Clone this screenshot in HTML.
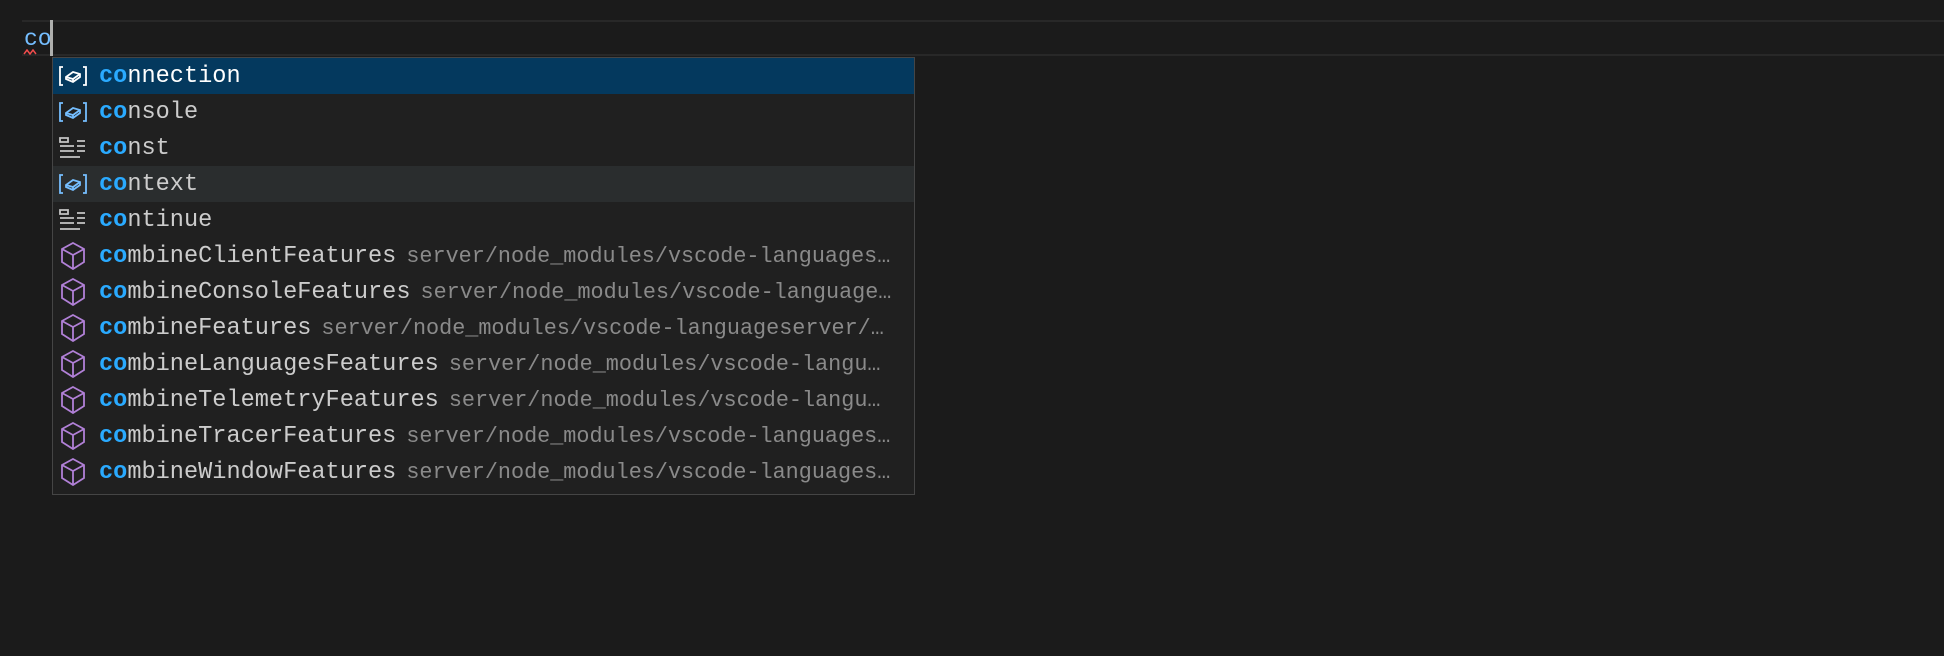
<!DOCTYPE html>
<html><head><style>
html,body{margin:0;padding:0;width:1944px;height:656px;background:#1b1b1b;overflow:hidden;font-family:"Liberation Mono",monospace;}
.line{position:absolute;left:22px;top:20px;width:1922px;height:32px;border-top:2px solid #282828;border-bottom:2px solid #282828;}
.co{position:absolute;left:24px;top:21px;font-size:23px;line-height:36px;color:#75beff;}
.cur{position:absolute;left:50px;top:20px;width:3px;height:36px;background:#aeafad;}
.squig{position:absolute;left:23px;top:49px;}
.w{position:absolute;left:52px;top:57px;width:861px;height:436px;background:#202020;border:1px solid #454545;}
.r{position:absolute;left:0;width:861px;height:36px;font-size:23.6px;line-height:38px;color:#cccccc;white-space:nowrap;}
.r .ic{position:absolute;left:5px;top:6px;}
.r .l{position:absolute;left:46px;}
.h{color:#2aaaff;font-weight:bold;}
.sel{background:#04395e;color:#fff;}
.hov{background:#2a2d2e;}
.d{color:#8a8a8a;font-size:21.8px;margin-left:10px;}
</style></head><body>
<div class="line"></div>
<div class="co">co</div>
<div class="cur"></div>
<svg class="squig" width="14" height="6"><path d="M1 5 L4 1 L7 5 L10 1 L13 5" stroke="#f14c4c" stroke-width="1.5" fill="none"/></svg>
<div class="w">
<div class="r sel" style="top:0"><svg class="ic" width="30" height="24" viewBox="0 0 30 24"><g stroke="#fff" stroke-width="1.8" fill="none"><path d="M5 3H2V21H5M25 3H28V21H25"/><path d="M8 13L15 8L22 10V13L15 18L8 15Z"/><path d="M8 13L15 15L22 10M15 15V18"/></g></svg><span class="l"><span class="h">co</span>nnection</span></div>
<div class="r" style="top:36px"><svg class="ic" width="30" height="24" viewBox="0 0 30 24"><g stroke="#75beff" stroke-width="1.8" fill="none"><path d="M5 3H2V21H5M25 3H28V21H25"/><path d="M8 13L15 8L22 10V13L15 18L8 15Z"/><path d="M8 13L15 15L22 10M15 15V18"/></g></svg><span class="l"><span class="h">co</span>nsole</span></div>
<div class="r" style="top:72px"><svg class="ic" width="30" height="24" viewBox="0 0 30 24"><g stroke="#c5c5c5" stroke-width="1.8" fill="none"><path d="M2 2H10V6H2ZM2 10H16M19 10H27M2 15H16M19 15H27M2 21H22M19 5H27"/></g></svg><span class="l"><span class="h">co</span>nst</span></div>
<div class="r hov" style="top:108px"><svg class="ic" width="30" height="24" viewBox="0 0 30 24"><g stroke="#75beff" stroke-width="1.8" fill="none"><path d="M5 3H2V21H5M25 3H28V21H25"/><path d="M8 13L15 8L22 10V13L15 18L8 15Z"/><path d="M8 13L15 15L22 10M15 15V18"/></g></svg><span class="l"><span class="h">co</span>ntext</span></div>
<div class="r" style="top:144px"><svg class="ic" width="30" height="24" viewBox="0 0 30 24"><g stroke="#c5c5c5" stroke-width="1.8" fill="none"><path d="M2 2H10V6H2ZM2 10H16M19 10H27M2 15H16M19 15H27M2 21H22M19 5H27"/></g></svg><span class="l"><span class="h">co</span>ntinue</span></div>
<div class="r" style="top:180px"><svg class="ic" width="30" height="28" viewBox="0 0 30 28" style="top:4px"><g stroke="#b180d7" stroke-width="1.8" fill="none"><path d="M15 1L26 7V20L15 27L4 20V7Z"/><path d="M4 7L15 13L26 7M15 13V27"/></g></svg><span class="l"><span class="h">co</span>mbineClientFeatures<span class="d">server/node_modules/vscode-languages…</span></span></div>
<div class="r" style="top:216px"><svg class="ic" width="30" height="28" viewBox="0 0 30 28" style="top:4px"><g stroke="#b180d7" stroke-width="1.8" fill="none"><path d="M15 1L26 7V20L15 27L4 20V7Z"/><path d="M4 7L15 13L26 7M15 13V27"/></g></svg><span class="l"><span class="h">co</span>mbineConsoleFeatures<span class="d">server/node_modules/vscode-language…</span></span></div>
<div class="r" style="top:252px"><svg class="ic" width="30" height="28" viewBox="0 0 30 28" style="top:4px"><g stroke="#b180d7" stroke-width="1.8" fill="none"><path d="M15 1L26 7V20L15 27L4 20V7Z"/><path d="M4 7L15 13L26 7M15 13V27"/></g></svg><span class="l"><span class="h">co</span>mbineFeatures<span class="d">server/node_modules/vscode-languageserver/…</span></span></div>
<div class="r" style="top:288px"><svg class="ic" width="30" height="28" viewBox="0 0 30 28" style="top:4px"><g stroke="#b180d7" stroke-width="1.8" fill="none"><path d="M15 1L26 7V20L15 27L4 20V7Z"/><path d="M4 7L15 13L26 7M15 13V27"/></g></svg><span class="l"><span class="h">co</span>mbineLanguagesFeatures<span class="d">server/node_modules/vscode-langu…</span></span></div>
<div class="r" style="top:324px"><svg class="ic" width="30" height="28" viewBox="0 0 30 28" style="top:4px"><g stroke="#b180d7" stroke-width="1.8" fill="none"><path d="M15 1L26 7V20L15 27L4 20V7Z"/><path d="M4 7L15 13L26 7M15 13V27"/></g></svg><span class="l"><span class="h">co</span>mbineTelemetryFeatures<span class="d">server/node_modules/vscode-langu…</span></span></div>
<div class="r" style="top:360px"><svg class="ic" width="30" height="28" viewBox="0 0 30 28" style="top:4px"><g stroke="#b180d7" stroke-width="1.8" fill="none"><path d="M15 1L26 7V20L15 27L4 20V7Z"/><path d="M4 7L15 13L26 7M15 13V27"/></g></svg><span class="l"><span class="h">co</span>mbineTracerFeatures<span class="d">server/node_modules/vscode-languages…</span></span></div>
<div class="r" style="top:396px"><svg class="ic" width="30" height="28" viewBox="0 0 30 28" style="top:4px"><g stroke="#b180d7" stroke-width="1.8" fill="none"><path d="M15 1L26 7V20L15 27L4 20V7Z"/><path d="M4 7L15 13L26 7M15 13V27"/></g></svg><span class="l"><span class="h">co</span>mbineWindowFeatures<span class="d">server/node_modules/vscode-languages…</span></span></div>
</div>
</body></html>
